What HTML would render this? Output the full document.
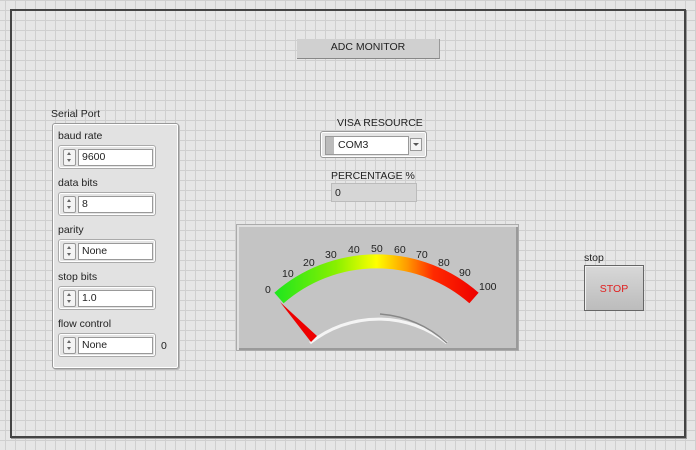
<!DOCTYPE html>
<html><head><style>
body{margin:0;width:696px;height:450px;overflow:hidden;font-family:"Liberation Sans",sans-serif;font-size:10.5px;color:#222;
background-color:#e6e6e6;
background-image:linear-gradient(to right,#cfcfcf 1px,transparent 1px),linear-gradient(to bottom,#cfcfcf 1px,transparent 1px);
background-size:10px 10px;background-position:5px 0px;position:relative}
.a{position:absolute}
.frame{left:10px;top:9px;width:672px;height:425px;border:2px solid #444;box-shadow:1px 1px 0 #999}
.ctl{position:absolute;left:58px;width:96px;height:22px;border:1px solid #aaa;border-radius:3px;background:#e4e4e4;box-shadow:inset 0 0 0 1px #fff}
.spin{position:absolute;left:4px;top:3px;width:11px;height:15px;border:1px solid #999;border-radius:2px;background:#f4f4f4}
.spin:before{content:"";position:absolute;left:3px;top:2px;border:2.5px solid transparent;border-bottom:3px solid #666;border-top:0}
.spin:after{content:"";position:absolute;left:3px;top:9px;border:2.5px solid transparent;border-top:3px solid #666;border-bottom:0}
.txt{position:absolute;left:19px;top:3px;border:1px solid #999;background:#fff;line-height:15px;padding-left:3px;box-sizing:border-box;width:75px;height:17px}
.lbl{position:absolute;left:58px}
</style></head><body>
<div class="a frame"></div>
<div class="a" style="left:297px;top:39px;width:142px;height:19px;background:#d0d0d0;border-bottom:1px solid #888;border-right:1px solid #999;text-align:center;line-height:16px">ADC MONITOR</div>

<div class="a" style="left:51px;top:108px">Serial Port</div>
<div class="a" style="left:52px;top:123px;width:125px;height:244px;border:1px solid #999;border-radius:3px;background:#e2e2e2;box-shadow:inset 0 0 0 1px #fff,1px 1px 0 #bbb"></div>
<div class="lbl a" style="top:130px">baud rate</div>
<div class="ctl" style="top:145px"><div class="spin"></div><div class="txt">9600</div></div>
<div class="lbl a" style="top:177px">data bits</div>
<div class="ctl" style="top:192px"><div class="spin"></div><div class="txt">8</div></div>
<div class="lbl a" style="top:224px">parity</div>
<div class="ctl" style="top:239px"><div class="spin"></div><div class="txt">None</div></div>
<div class="lbl a" style="top:271px">stop bits</div>
<div class="ctl" style="top:286px"><div class="spin"></div><div class="txt">1.0</div></div>
<div class="lbl a" style="top:318px">flow control</div>
<div class="ctl" style="top:333px"><div class="spin"></div><div class="txt">None</div></div>
<div class="a" style="left:161px;top:340px">0</div>

<div class="a" style="left:337px;top:117px">VISA RESOURCE</div>
<div class="a" style="left:320px;top:131px;width:105px;height:25px;border:1px solid #999;border-radius:3px;background:#e4e4e4;box-shadow:inset 0 0 0 1px #fff">
 <div class="a" style="left:4px;top:4px;width:82px;height:17px;border:1px solid #999;background:#fff"><div class="a" style="left:0;top:0;width:8px;height:17px;background:#bbb"></div><div class="a" style="left:12px;top:2px">COM3</div></div>
 <div class="a" style="left:89px;top:6px;width:10px;height:11px;border:1px solid #999;background:#f4f4f4"><div class="a" style="left:2px;top:4px;border:3px solid transparent;border-top:3px solid #555;border-bottom:0"></div></div>
</div>
<div class="a" style="left:331px;top:170px">PERCENTAGE %</div>
<div class="a" style="left:331px;top:183px;width:86px;height:19px;background:#d6d6d6;border:1px solid #bbb;box-sizing:border-box;line-height:18px;padding-left:3px">0</div>

<div class="a" style="left:236px;top:224px;width:283px;height:127px;background:#c4c4c4;border:1px solid #aaa;box-shadow:inset 2px 2px 0 #e0e0e0,inset -2px -2px 0 #9a9a9a;box-sizing:border-box"></div>
<svg class="a" style="left:0;top:0" width="696" height="450">
 <defs><linearGradient id="g" x1="275" x2="478" y1="0" y2="0" gradientUnits="userSpaceOnUse">
  <stop offset="0" stop-color="#1ee61e"/><stop offset="0.3" stop-color="#88f000"/><stop offset="0.5" stop-color="#ffff00"/><stop offset="0.65" stop-color="#ff9a00"/><stop offset="0.78" stop-color="#ff2a00"/><stop offset="1" stop-color="#ee0000"/></linearGradient></defs>
 <path d="M279 298 A148 148 0 0 1 474 298" fill="none" stroke="url(#g)" stroke-width="14"/>
 <path d="M310 343 A110 110 0 0 1 447 343" fill="none" stroke="#f4f4f4" stroke-width="3"/>
 <path d="M380 314 A110 110 0 0 1 447 343" fill="none" stroke="#888" stroke-width="1.5"/>
 <polygon points="280,302 317,336 311,342" fill="#e00"/>
 <g font-family="Liberation Sans" font-size="10.5" fill="#222">
  <text x="265" y="293">0</text><text x="282" y="277">10</text><text x="303" y="266">20</text><text x="325" y="258">30</text><text x="348" y="253">40</text><text x="371" y="252">50</text><text x="394" y="253">60</text><text x="416" y="258">70</text><text x="438" y="266">80</text><text x="459" y="276">90</text><text x="479" y="290">100</text>
 </g>
</svg>

<div class="a" style="left:584px;top:252px">stop</div>
<div class="a" style="left:584px;top:265px;width:60px;height:46px;border:1px solid #666;background:linear-gradient(#d8d8d8,#bcbcbc);box-shadow:inset 1px 1px 0 #f0f0f0;box-sizing:border-box;color:#e02020;text-align:center;line-height:46px">STOP</div>
</body></html>
